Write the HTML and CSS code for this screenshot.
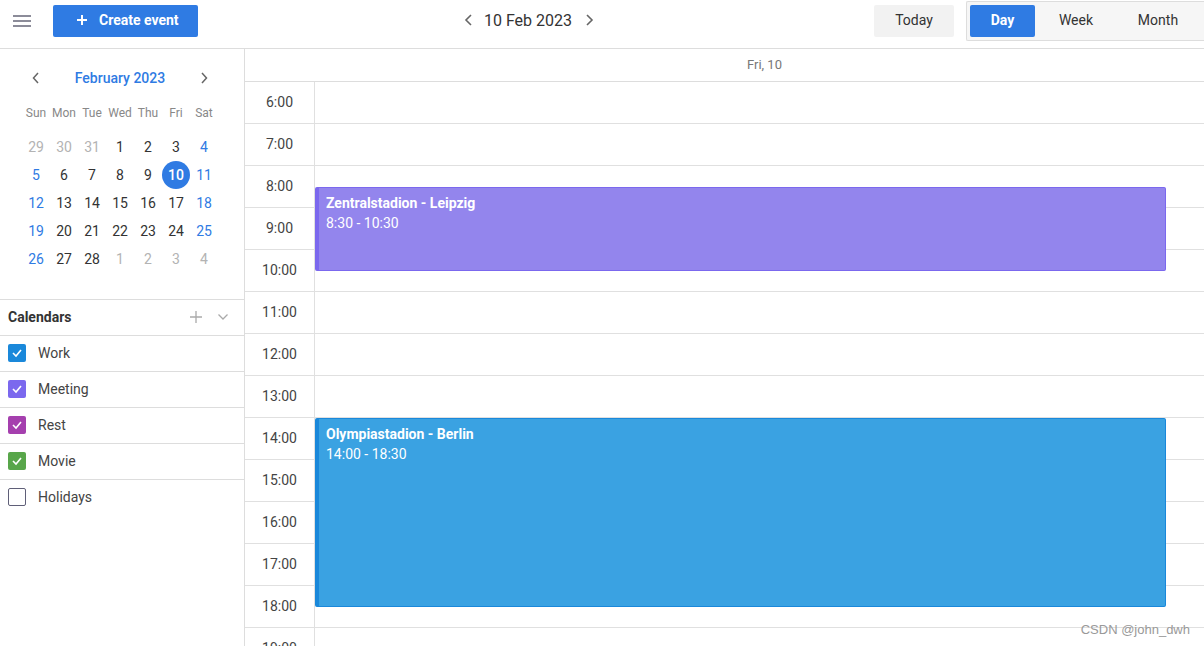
FILE: index.html
```html
<!DOCTYPE html>
<html>
<head>
<meta charset="utf-8">
<link rel="stylesheet" href="styles.css">
</head>
<body>
<div class="app">
  <header class="topbar">
    <div class="left-group">
      <button class="hamburger" aria-label="menu">
        <svg width="20" height="14" viewBox="0 0 20 14"><path d="M1 2h18M1 7h18M1 12h18" stroke="#8c8c99" stroke-width="2"/></svg>
      </button>
      <button class="create-btn">
        <svg width="12" height="12" viewBox="0 0 12 12"><path d="M6 1v10M1 6h10" stroke="#fff" stroke-width="2"/></svg>
        <span>Create event</span>
      </button>
    </div>
    <div class="date-nav">
      <svg class="chev" width="10" height="14" viewBox="0 0 10 14"><path d="M7 2L2 7l5 5" fill="none" stroke="#666" stroke-width="1.6"/></svg>
      <span class="date-title">10 Feb 2023</span>
      <svg class="chev" width="10" height="14" viewBox="0 0 10 14"><path d="M3 2l5 5-5 5" fill="none" stroke="#666" stroke-width="1.6"/></svg>
    </div>
    <div class="right-group">
      <button class="today-btn">Today</button>
      <div class="segmented">
        <button class="seg seg-day active">Day</button>
        <button class="seg seg-week">Week</button>
        <button class="seg seg-month">Month</button>
      </div>
    </div>
  </header>
  <div class="body">
    <aside class="sidebar">
      <div class="mini-cal">
        <div class="mini-head">
          <span class="mini-arrow"><svg width="8" height="12" viewBox="0 0 8 12"><path d="M6 1L1.5 6 6 11" fill="none" stroke="#666" stroke-width="1.5"/></svg></span>
          <span class="mini-title">February 2023</span>
          <span class="mini-arrow"><svg width="8" height="12" viewBox="0 0 8 12"><path d="M2 1l4.5 5L2 11" fill="none" stroke="#666" stroke-width="1.5"/></svg></span>
        </div>
        <div class="mini-grid">
          <span class="wd">Sun</span><span class="wd">Mon</span><span class="wd">Tue</span><span class="wd">Wed</span><span class="wd">Thu</span><span class="wd">Fri</span><span class="wd">Sat</span>
          <span class="d out">29</span><span class="d out">30</span><span class="d out">31</span><span class="d">1</span><span class="d">2</span><span class="d">3</span><span class="d we">4</span>
          <span class="d we">5</span><span class="d">6</span><span class="d">7</span><span class="d">8</span><span class="d">9</span><span class="d sel"><span>10</span></span><span class="d we">11</span>
          <span class="d we">12</span><span class="d">13</span><span class="d">14</span><span class="d">15</span><span class="d">16</span><span class="d">17</span><span class="d we">18</span>
          <span class="d we">19</span><span class="d">20</span><span class="d">21</span><span class="d">22</span><span class="d">23</span><span class="d">24</span><span class="d we">25</span>
          <span class="d we">26</span><span class="d">27</span><span class="d">28</span><span class="d out">1</span><span class="d out">2</span><span class="d out">3</span><span class="d out">4</span>
        </div>
      </div>
      <div class="cal-head">
        <span class="cal-title">Calendars</span>
        <span class="cal-icons">
          <svg width="14" height="14" viewBox="0 0 14 14"><path d="M7 1v12M1 7h12" stroke="#aaa" stroke-width="1.3"/></svg>
          <svg width="12" height="8" viewBox="0 0 12 8"><path d="M1.5 1.5L6 6l4.5-4.5" fill="none" stroke="#aaa" stroke-width="1.3"/></svg>
        </span>
      </div>
      <ul class="cal-list">
        <li class="cal-item"><span class="cb cb-work"><svg width="12" height="10" viewBox="0 0 12 10"><path d="M2 5l3 3 5-6" fill="none" stroke="#fff" stroke-width="1.6"/></svg></span>Work</li>
        <li class="cal-item"><span class="cb cb-meeting"><svg width="12" height="10" viewBox="0 0 12 10"><path d="M2 5l3 3 5-6" fill="none" stroke="#fff" stroke-width="1.6"/></svg></span>Meeting</li>
        <li class="cal-item"><span class="cb cb-rest"><svg width="12" height="10" viewBox="0 0 12 10"><path d="M2 5l3 3 5-6" fill="none" stroke="#fff" stroke-width="1.6"/></svg></span>Rest</li>
        <li class="cal-item"><span class="cb cb-movie"><svg width="12" height="10" viewBox="0 0 12 10"><path d="M2 5l3 3 5-6" fill="none" stroke="#fff" stroke-width="1.6"/></svg></span>Movie</li>
        <li class="cal-item no-border"><span class="cb cb-empty"></span>Holidays</li>
      </ul>
    </aside>
    <main class="main">
      <div class="day-head">Fri, 10</div>
      <div class="grid">
        <div class="row"><div class="time">6:00</div><div class="cell"></div></div>
        <div class="row"><div class="time">7:00</div><div class="cell"></div></div>
        <div class="row"><div class="time">8:00</div><div class="cell"></div></div>
        <div class="row"><div class="time">9:00</div><div class="cell"></div></div>
        <div class="row"><div class="time">10:00</div><div class="cell"></div></div>
        <div class="row"><div class="time">11:00</div><div class="cell"></div></div>
        <div class="row"><div class="time">12:00</div><div class="cell"></div></div>
        <div class="row"><div class="time">13:00</div><div class="cell"></div></div>
        <div class="row"><div class="time">14:00</div><div class="cell"></div></div>
        <div class="row"><div class="time">15:00</div><div class="cell"></div></div>
        <div class="row"><div class="time">16:00</div><div class="cell"></div></div>
        <div class="row"><div class="time">17:00</div><div class="cell"></div></div>
        <div class="row"><div class="time">18:00</div><div class="cell"></div></div>
        <div class="row"><div class="time">19:00</div><div class="cell"></div></div>
        <div class="event ev-purple" style="top:105px;height:84px;">
          <div class="ev-title">Zentralstadion - Leipzig</div>
          <div class="ev-time">8:30 - 10:30</div>
        </div>
        <div class="event ev-blue" style="top:336px;height:189px;">
          <div class="ev-title">Olympiastadion - Berlin</div>
          <div class="ev-time">14:00 - 18:30</div>
        </div>
      </div>
    </main>
  </div>
  <div class="watermark">CSDN @john_dwh</div>
</div>
</body>
</html>
```

FILE: styles.css
```css
* { box-sizing: border-box; }
html, body { margin: 0; padding: 0; }
body {
  font-family: Roboto, "Liberation Sans", Arial, sans-serif;
  color: #333;
  background: #fff;
  width: 1204px;
  height: 646px;
  overflow: hidden;
}
button { font-family: inherit; border: 0; background: none; padding: 0; cursor: pointer; }
.app { position: relative; height: 646px; overflow: hidden; }

.topbar {
  height: 49px;
  border-bottom: 1px solid #ddd;
  display: flex;
  align-items: flex-start;
  justify-content: space-between;
}
.left-group { display: flex; align-items: center; height: 41px; padding-left: 12px; }
.hamburger { width: 20px; height: 14px; display: flex; }
.hamburger svg { display: block; }
.create-btn {
  margin-left: 21px;
  width: 145px;
  height: 32px;
  background: #2f7be3;
  color: #fff;
  border-radius: 2px;
  font-size: 14px;
  font-weight: 700;
  display: flex;
  align-items: center;
  padding-left: 23px;
  padding-bottom: 1px;
  gap: 11px;
}
.date-nav {
  display: flex;
  align-items: center;
  height: 40px;
  gap: 8px;
  margin-left: -14px;
}
.date-title { font-size: 16px; color: #333; margin: 0 4px 0 2px; }
.right-group { display: flex; align-items: flex-start; padding-top: 1px; }
.today-btn {
  margin-top: 4px;
  width: 80px;
  height: 32px;
  background: #f2f2f2;
  color: #333;
  font-size: 14px;
  border-radius: 2px;
  padding-bottom: 2px;
}
.segmented {
  margin-left: 12px;
  height: 40px;
  border: 1px solid #ddd;
  border-right: 0;
  border-radius: 2px 0 0 2px;
  background: #f6f6f6;
  padding: 3px 4px 3px 3px;
  display: flex;
  width: 238px;
}
.seg { height: 32px; font-size: 14px; color: #333; padding-bottom: 2px; }
.seg-day { width: 65px; }
.seg-week { width: 82px; }
.seg-month { width: 82px; }
.seg.active { background: #2f7be3; color: #fff; font-weight: 700; border-radius: 2px; }

.body { display: flex; height: 597px; }
.sidebar {
  width: 245px;
  border-right: 1px solid #ddd;
  flex: none;
}
.mini-cal { height: 251px; border-bottom: 1px solid #ddd; padding: 13px 0 0 22px; }
.mini-head { display: flex; align-items: center; width: 196px; height: 32px; }
.mini-arrow { width: 28px; display: flex; justify-content: center; }
.mini-title { flex: 1; text-align: center; color: #2f7be3; font-size: 14px; font-weight: 500; }
.mini-grid {
  display: grid;
  grid-template-columns: repeat(7, 28px);
  grid-template-rows: 33px;
  grid-auto-rows: 28px;
  width: 196px;
  margin-top: 6px;
}
.wd { font-size: 12px; color: #888; display: flex; align-items: flex-start; justify-content: center; padding-top: 6px; }
.d { font-size: 14px; color: #333; display: flex; align-items: center; justify-content: center; }
.d.out { color: #b3b3b3; }
.d.we { color: #2f7be3; }
.d.sel span {
  width: 28px; height: 28px; border-radius: 50%;
  background: #2f7be3; color: #fff; font-weight: 500;
  display: flex; align-items: center; justify-content: center;
}

.cal-head {
  height: 36px;
  display: flex;
  align-items: center;
  justify-content: space-between;
  padding: 0 15px 2px 8px;
  border-bottom: 1px solid #ddd;
}
.cal-title { font-size: 14px; font-weight: 700; color: #333; }
.cal-icons { display: flex; align-items: center; gap: 14px; }
.cal-list { list-style: none; margin: 0; padding: 0; }
.cal-item {
  height: 36px;
  display: flex;
  align-items: center;
  padding-left: 8px;
  padding-bottom: 2px;
  font-size: 14px;
  color: #444;
  border-bottom: 1px solid #ddd;
}
.cal-item.no-border { border-bottom: 0; padding-bottom: 3px; }
.cb {
  width: 18px; height: 18px;
  border-radius: 2px;
  margin-right: 12px;
  display: flex; align-items: center; justify-content: center;
}
.cb-work { background: #1a88da; }
.cb-meeting { background: #7b68ee; }
.cb-rest { background: #a53fae; }
.cb-movie { background: #58a64a; }
.cb-empty { border: 1px solid #5f5f78; }

.main { flex: 1; min-width: 0; }
.day-head {
  height: 33px;
  border-bottom: 1px solid #ddd;
  font-size: 13px;
  color: #777;
  display: flex;
  align-items: center;
  justify-content: center;
  padding-left: 80px;
  padding-bottom: 2px;
}
.grid { position: relative; }
.row { display: flex; height: 42px; border-bottom: 1px solid #e0e0e0; }
.time {
  width: 70px;
  border-right: 1px solid #e0e0e0;
  font-size: 14px;
  color: #444;
  display: flex;
  align-items: center;
  justify-content: center;
  padding-bottom: 2px;
}
.cell { flex: 1; }
.event {
  position: absolute;
  left: 70px;
  width: 851px;
  border-radius: 2px;
  padding: 7px 7px;
  color: #fff;
  font-size: 14px;
}
.ev-purple { background: #9385ed; border: 1px solid #7b68ee; border-left: 4px solid #7b68ee; }
.ev-blue { background: #3aa2e2; border: 1px solid #1a88da; border-left: 4px solid #1a88da; }
.ev-title { font-weight: 700; line-height: 17px; }
.ev-time { margin-top: 3px; line-height: 17px; }

.watermark {
  position: absolute;
  right: 14px;
  bottom: 9px;
  font-family: "Liberation Sans", Arial, sans-serif;
  font-size: 13px;
  color: #999;
}
```
